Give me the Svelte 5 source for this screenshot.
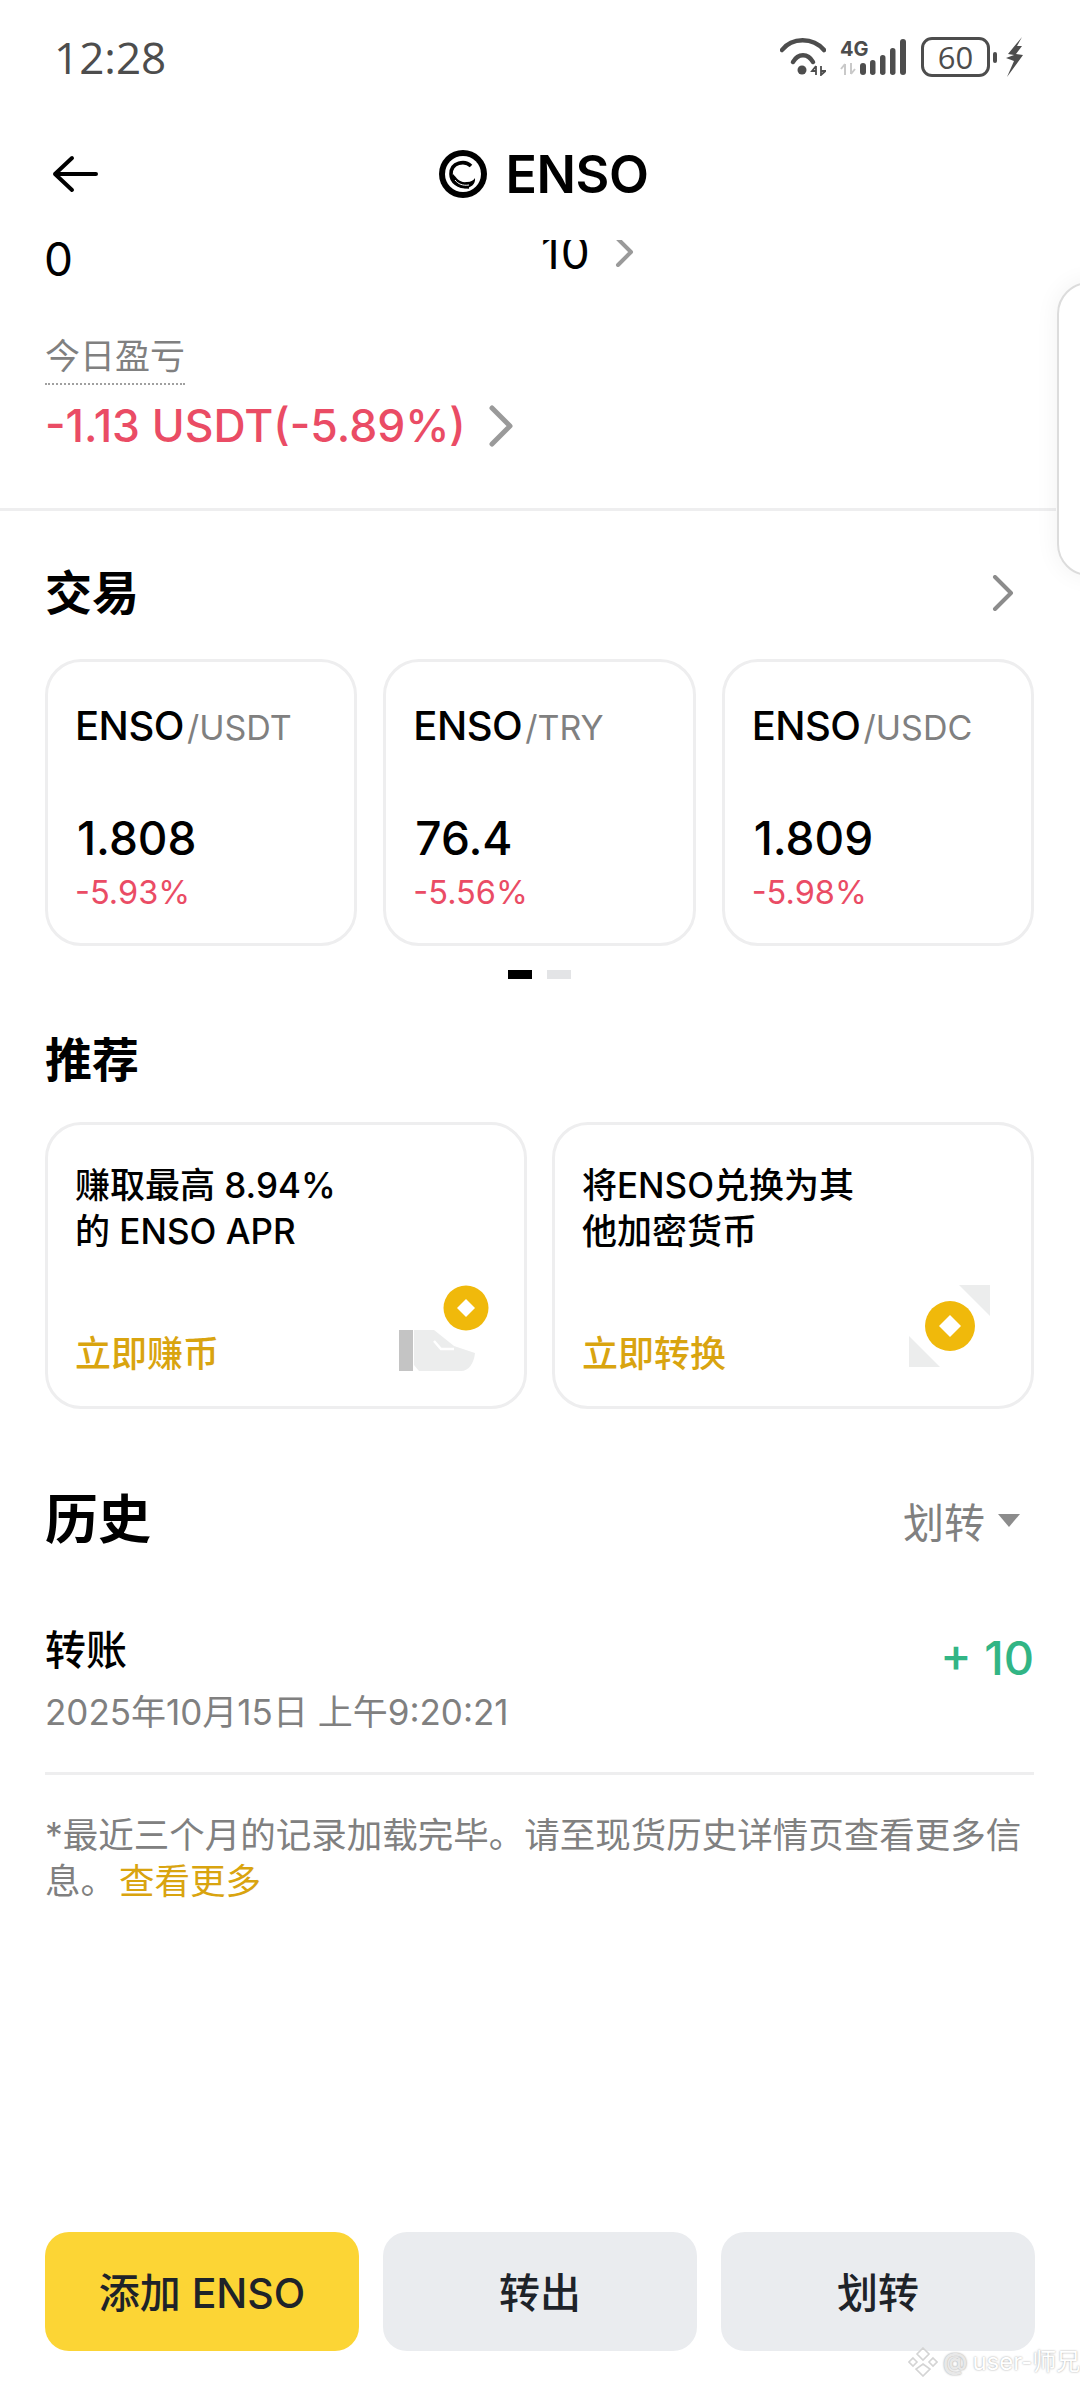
<script lang="ts">
	const pairs = [
		{ base: 'ENSO', quote: '/USDT', price: '1.808', change: '-5.93%' },
		{ base: 'ENSO', quote: '/TRY', price: '76.4', change: '-5.56%' },
		{ base: 'ENSO', quote: '/USDC', price: '1.809', change: '-5.98%' }
	];
</script>

<div class="page">
	<div class="statusbar">
		<span class="time">12:28</span>
		<div class="status-icons">
			<svg class="wifi" width="46" height="38" viewBox="0 0 46 38" fill="none" stroke="#4d4d4d" stroke-linecap="round">
				<path d="M2 12 C12 -1 33 -1 44 12" stroke-width="4.5" />
				<path d="M13 24 C18 15 28 15 33 24" stroke-width="4.5" />
				<circle cx="22" cy="32" r="4.5" fill="#4d4d4d" stroke="none" />
				<path d="M36 28 V37 M36 28 L32 33 H36 M41 28 V37 L45.5 33 H41" stroke-width="1.8" stroke-linecap="butt" />
			</svg>
			<div class="net">
				<span class="net-label">4G</span>
				<svg width="16" height="12" viewBox="0 0 16 12" fill="none" stroke="#c9c9c9" stroke-width="2">
					<path d="M5 1 V12 M11 0 V11 M1 6 L5 1 M15 6 L11 11" />
				</svg>
			</div>
			<svg class="bars" width="46" height="40" viewBox="0 0 46 40" fill="#4d4d4d">
				<rect x="0" y="26" width="6" height="12" rx="3" />
				<rect x="10" y="23" width="5.5" height="15" rx="2.7" />
				<rect x="20" y="18" width="5.5" height="20" rx="2.7" />
				<rect x="30" y="11" width="5.5" height="27" rx="2.7" />
				<rect x="40" y="2" width="6" height="36" rx="3" />
			</svg>
			<div class="battery"><span>60</span></div>
			<div class="battery-cap"></div>
			<svg class="bolt" width="17" height="40" viewBox="0 0 17 40" fill="#4d4d4d">
				<path d="M16 0 L2 17 L8 18 L0 21 L8 24 L1 40 L17 18 L10 17 L16 9 L11 9 Z" />
			</svg>
		</div>
	</div>

	<header class="nav">
		<svg class="back" width="48" height="38" viewBox="0 0 48 38" fill="none" stroke="#000" stroke-width="4" stroke-linecap="round" stroke-linejoin="round">
			<path d="M21 3 L4 19 L21 35 M4 19 H45" />
		</svg>
		<div class="nav-title">
			<svg width="48" height="48" viewBox="0 0 48 48">
				<circle cx="24" cy="24" r="24" fill="#000" />
				<circle cx="24" cy="24" r="18" fill="#fff" />
				<path d="M32 16 C26 10 12 12 12 24 C12 32 19 37 30 37" fill="none" stroke="#000" stroke-width="3.6" />
				<path d="M14 24 C18 28 20 33 28 32 C32 32 35 30 36 28 C37 35 30 39 24 38 C17 37 13 31 14 24 Z" fill="#000" />
				<path d="M16 30 C19 34 24 36 30 35" fill="none" stroke="#fff" stroke-width="1" />
			</svg>
			<span>ENSO</span>
		</div>
	</header>

	<div class="balance-clip">
		<span class="balance-left">0</span>
		<div class="balance-right">
			<span>10</span>
			<svg width="20" height="30" viewBox="0 0 20 30" fill="none" stroke="#9a9a9a" stroke-width="4" stroke-linecap="round" stroke-linejoin="round">
				<path d="M3 2 L16 15 L3 28" />
			</svg>
		</div>
	</div>

	<section class="pnl">
		<div class="pnl-label"><span>今日盈亏</span></div>
		<div class="pnl-value">
			<span>-1.13 USDT(-5.89%)</span>
			<svg width="26" height="42" viewBox="0 0 26 42" fill="none" stroke="#9a9a9a" stroke-width="5" stroke-linecap="round" stroke-linejoin="round">
				<path d="M4 3 L22 21 L4 39" />
			</svg>
		</div>
	</section>

	<div class="rule"></div>

	<section class="trade">
		<div class="section-head">
			<h2>交易</h2>
			<svg width="22" height="36" viewBox="0 0 22 36" fill="none" stroke="#8c8c8c" stroke-width="4" stroke-linecap="round" stroke-linejoin="round">
				<path d="M3 2 L19 18 L3 34" />
			</svg>
		</div>
		<div class="pair-row">
			{#each pairs as pair}
				<div class="pair-card">
					<div class="pair-name">{pair.base}<span>{pair.quote}</span></div>
					<div class="pair-price">{pair.price}</div>
					<div class="pair-change">{pair.change}</div>
				</div>
			{/each}
		</div>
		<div class="pager">
			<i class="on"></i>
			<i></i>
		</div>
	</section>

	<section class="recommend">
		<h2>推荐</h2>
		<div class="promo-row">
			<div class="promo-card">
				<p>赚取最高 8.94%<br />的 ENSO APR</p>
				<div class="promo-foot">
					<span class="promo-link">立即赚币</span>
					<svg class="promo-art earn" width="90" height="86" viewBox="0 0 90 86">
						<rect x="0" y="45" width="14" height="41" fill="#c4c4c4" />
						<path d="M15 45 H35 L55 61 L76 68 C75 78 70 86 62 86 H20 L15 80 Z" fill="#eceded" />
						<path d="M35 56 L42 64 L55 64" fill="none" stroke="#fff" stroke-width="2.5" />
						<circle cx="67" cy="23" r="22.5" fill="#f0b90b" />
						<path d="M67 14 L76 23 L67 32 L58 23 Z" fill="#fff" />
					</svg>
				</div>
			</div>
			<div class="promo-card">
				<p>将ENSO兑换为其<br />他加密货币</p>
				<div class="promo-foot">
					<span class="promo-link">立即转换</span>
					<svg class="promo-art swap" width="81" height="82" viewBox="0 0 81 82">
						<path d="M50 0 H81 V31 Z" fill="#eceded" />
						<path d="M0 51 L31 82 H0 Z" fill="#eceded" />
						<circle cx="41" cy="41" r="25" fill="#f0b90b" />
						<path d="M41 30 L52 41 L41 52 L30 41 Z" fill="#fff" />
					</svg>
				</div>
			</div>
		</div>
	</section>

	<section class="history">
		<div class="history-head">
			<h2>历史</h2>
			<div class="filter">
				<span>划转</span>
				<svg width="22" height="14" viewBox="0 0 22 14"><path d="M0 1 H22 L11 14 Z" fill="#8c8c8c" /></svg>
			</div>
		</div>
		<div class="history-item">
			<div>
				<div class="item-title">转账</div>
				<div class="item-date">2025年10月15日 上午9:20:21</div>
			</div>
			<div class="item-amount">+ 10</div>
		</div>
		<p class="note">*最近三个月的记录加载完毕。请至现货历史详情页查看更多信息。<span>查看更多</span></p>
	</section>

	<footer class="actions">
		<button class="primary">添加 ENSO</button>
		<button>转出</button>
		<button>划转</button>
	</footer>

	<div class="side-panel"></div>

	<div class="watermark">
		<svg width="30" height="30" viewBox="0 0 30 30" fill="#fff" stroke="#d4d4d4" stroke-width="1.6">
			<path d="M15 1 L21 7 L15 13 L9 7 Z M5 11 L9 15 L5 19 L1 15 Z M25 11 L29 15 L25 19 L21 15 Z M15 17 L22 22 L15 29 L8 22 Z" />
		</svg>
		<span class="wm-at">@</span>
		<span>user-师兄</span>
	</div>
</div>

<style>
	:global(body) {
		margin: 0;
		background: #fff;
	}

	.page {
		position: relative;
		display: flex;
		flex-direction: column;
		width: 1080px;
		height: 2388px;
		overflow: hidden;
		background: #fff;
		color: #000;
		font-family: Inter, 'Noto Sans CJK SC', sans-serif;
	}

	.statusbar {
		display: flex;
		align-items: center;
		justify-content: space-between;
		box-sizing: border-box;
		height: 114px;
		padding: 0 57px 0 54px;
		flex: none;
	}

	.time {
		font-size: 44px;
		color: #4d4d4d;
		font-family: 'Open Sans', sans-serif;
	}

	.status-icons {
		display: flex;
		align-items: center;
	}

	.wifi {
		margin-right: 14px;
	}

	.net {
		display: flex;
		flex-direction: column;
		align-items: flex-start;
		width: 26px;
		line-height: 1;
	}

	.net-label {
		font-size: 20px;
		font-weight: 700;
		color: #4d4d4d;
		height: 24px;
	}

	.bars {
		margin-left: -6px;
		margin-right: 15px;
	}

	.battery {
		box-sizing: border-box;
		display: flex;
		align-items: center;
		justify-content: center;
		width: 69px;
		height: 40px;
		border: 3px solid #4d4d4d;
		border-radius: 11px;
		font-size: 31px;
		color: #4d4d4d;
		font-family: 'Open Sans', sans-serif;
	}

	.battery-cap {
		width: 4px;
		height: 11px;
		margin: 0 9px 0 3px;
		border-radius: 2px;
		background: #4d4d4d;
	}

	.nav {
		position: relative;
		display: flex;
		align-items: center;
		justify-content: center;
		height: 120px;
		flex: none;
	}

	.back {
		position: absolute;
		left: 51px;
		top: 41px;
	}

	.nav-title {
		display: flex;
		align-items: center;
		gap: 19px;
		font-size: 52px;
		font-weight: 600;
		letter-spacing: -0.5px;
		margin-left: 7px;
	}

	.balance-clip {
		position: relative;
		display: flex;
		flex: none;
		height: 50px;
		padding: 0 45px;
		margin-top: 6px;
		overflow: hidden;
		font-size: 46px;
		line-height: 56px;
	}

	.balance-left {
		position: absolute;
		left: 44px;
		top: -9px;
	}

	.balance-right {
		position: absolute;
		left: 541px;
		top: -16px;
		display: flex;
		align-items: center;
		gap: 24px;
		letter-spacing: 1px;
	}

	.pnl {
		padding: 43px 45px 0;
		flex: none;
	}

	.pnl-label span {
		display: inline-block;
		padding-bottom: 4px;
		border-bottom: 2px dotted #a0a0a0;
		font-size: 35px;
		line-height: 46px;
		color: #808080;
	}

	.pnl-value {
		display: flex;
		align-items: center;
		gap: 22px;
		margin-top: 15px;
		font-size: 44.5px;
		line-height: 52px;
		font-weight: 500;
		color: #ea4c65;
	}

	.rule {
		flex: none;
		width: 1056px;
		height: 3px;
		margin-top: 56px;
		background: #eeeeef;
	}

	h2 {
		margin: 0;
		font-size: 47px;
		line-height: 56px;
		font-weight: 700;
	}

	.trade {
		flex: none;
		padding: 54px 46px 0 45px;
	}

	.section-head {
		display: flex;
		align-items: center;
		justify-content: space-between;
		padding-right: 20px;
	}

	.pair-row {
		display: flex;
		gap: 26px;
		margin-top: 38px;
	}

	.pair-card {
		box-sizing: border-box;
		flex: 1;
		height: 287px;
		padding: 39px 27px 0;
		border: 3px solid #eeeeef;
		border-radius: 36px;
	}

	.pair-name {
		font-size: 40px;
		line-height: 50px;
		font-weight: 500;
		white-space: nowrap;
		letter-spacing: -0.5px;
	}

	.pair-name span {
		margin-left: 3px;
		font-size: 34px;
		font-weight: 400;
		color: #808080;
		letter-spacing: 0;
	}

	.pair-price {
		margin-top: 58px;
		padding-left: 2px;
		font-size: 46px;
		line-height: 54px;
		font-weight: 500;
	}

	.pair-change {
		margin-top: 7px;
		font-size: 32.5px;
		line-height: 42px;
		color: #ea4c65;
	}

	.pager {
		display: flex;
		justify-content: center;
		gap: 15px;
		margin-top: 24px;
	}

	.pager i {
		display: block;
		width: 24px;
		height: 9px;
		background: #e3e4e6;
	}

	.pager i.on {
		background: #000;
	}

	.recommend {
		flex: none;
		padding: 53px 46px 0 45px;
	}

	.promo-row {
		display: flex;
		gap: 25px;
		margin-top: 34px;
	}

	.promo-card {
		box-sizing: border-box;
		display: flex;
		flex-direction: column;
		justify-content: space-between;
		flex: 1;
		height: 287px;
		padding: 37px 28px 29px 27px;
		border: 3px solid #eeeeef;
		border-radius: 36px;
	}

	.promo-card p {
		margin: 0;
		font-size: 35px;
		line-height: 46px;
		font-weight: 500;
	}

	.promo-foot {
		display: flex;
		align-items: flex-end;
		justify-content: space-between;
		height: 46px;
	}

	.promo-link {
		font-size: 36px;
		line-height: 46px;
		font-weight: 500;
		color: #d9a40f;
	}

	.promo-art {
		flex: none;
		margin-bottom: 6px;
		margin-right: 7px;
	}

	.promo-art.swap {
		margin-bottom: 10px;
		margin-right: 13px;
	}

	.history {
		flex: none;
		padding: 80px 46px 0 45px;
	}

	.history-head {
		display: flex;
		align-items: center;
		justify-content: space-between;
	}

	.history-head h2 {
		font-size: 53px;
		line-height: 62px;
	}

	.filter {
		display: flex;
		align-items: center;
		gap: 13px;
		padding-right: 14px;
		font-size: 41px;
		color: #808080;
	}

	.history-item {
		display: flex;
		align-items: center;
		justify-content: space-between;
		margin-top: 72px;
		padding-bottom: 38px;
		border-bottom: 3px solid #eeeeef;
	}

	.item-title {
		font-size: 41px;
		line-height: 54px;
		font-weight: 500;
	}

	.item-date {
		margin-top: 13px;
		font-size: 35px;
		line-height: 44px;
		color: #808080;
		letter-spacing: 0;
	}

	.item-amount {
		margin-top: -42px;
		font-size: 47px;
		font-weight: 500;
		color: #32b585;
	}

	.note {
		margin: 38px 0 0;
		font-size: 35.5px;
		line-height: 46px;
		color: #808080;
	}

	.note span {
		margin-left: 3px;
		color: #d9a40f;
	}

	.actions {
		display: flex;
		gap: 24px;
		margin-top: auto;
		padding: 0 45px 37px;
	}

	.actions button {
		flex: 1;
		height: 119px;
		padding: 0 0 4px;
		border: 0;
		border-radius: 24px;
		background: #eaecef;
		color: #1e2329;
		font-family: inherit;
		font-size: 41px;
		font-weight: 500;
	}

	.actions button.primary {
		background: #fcd535;
	}

	.side-panel {
		position: absolute;
		left: 1057px;
		top: 282px;
		width: 60px;
		height: 290px;
		border: 2px solid #dcdcdc;
		border-radius: 36px;
		background: #fff;
		box-shadow: 0 0 24px rgba(0, 0, 0, 0.06);
	}

	.watermark {
		position: absolute;
		left: 908px;
		top: 2347px;
		display: flex;
		align-items: center;
		gap: 5px;
		height: 30px;
		white-space: nowrap;
		font-size: 24px;
		line-height: 30px;
		color: #fff;
		text-shadow: 0 0 2px #999;
	}

	.wm-at {
		font-weight: 700;
		color: #e8e8e8;
	}
</style>
